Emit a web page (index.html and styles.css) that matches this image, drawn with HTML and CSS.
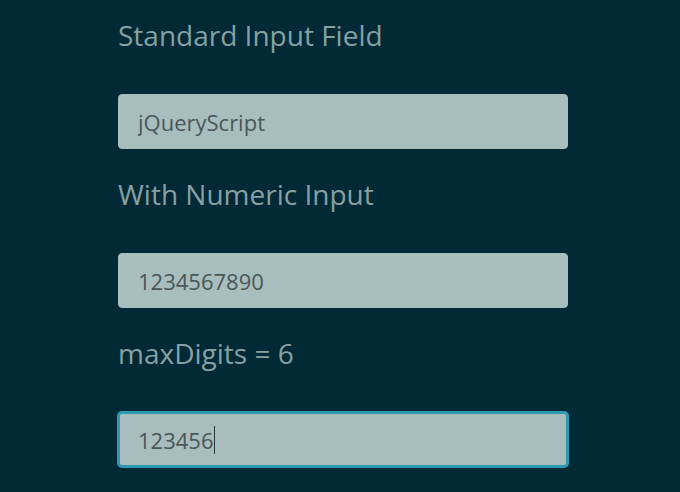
FILE: index.html
```html
<!DOCTYPE html>
<html lang="en">
<head>
    <meta charset="UTF-8">
    <meta name="viewport" content="width=device-width, initial-scale=1.0">
    <title>Input Mask Demo</title>
    <link rel="stylesheet" href="styles.css">
</head>
<body>
    <div class="container">
        <div class="field">
            <h3 class="label">Standard Input Field</h3>
            <input type="text" class="text-input" value="jQueryScript">
        </div>

        <div class="field">
            <h3 class="label">With Numeric Input</h3>
            <input type="text" class="text-input" value="1234567890">
        </div>

        <div class="field">
            <h3 class="label">maxDigits = 6</h3>
            <div class="input-wrap">
                <input type="text" class="text-input is-focused" value="123456" autofocus>
                <span class="caret"></span>
            </div>
        </div>
    </div>

    <script>
        const focused = document.querySelector('.is-focused');
        focused.focus();
        focused.setSelectionRange(focused.value.length, focused.value.length);
    </script>
</body>
</html>
```

FILE: styles.css
```css
body {
    font-family: 'Open Sans', 'Liberation Sans', sans-serif;
    margin: 0;
    padding: 0;
    background: #012a36;
    min-height: 100vh;
}

.container {
    width: 450px;
    margin-left: 118px;
    padding-top: 18px;
}

.field {
    height: 159px;
}

.label {
    color: #87a0a2;
    font-size: 28px;
    font-weight: normal;
    line-height: 34px;
    margin: 0 0 42px 0;
}

.input-wrap {
    position: relative;
}

.text-input {
    display: block;
    width: 100%;
    height: 55px;
    box-sizing: border-box;
    padding: 0 19px;
    background: #a8bdbd;
    border: 1px solid #a8bdbd;
    border-radius: 4px;
    color: #4a5759;
    font-family: 'Open Sans', 'Liberation Sans', sans-serif;
    font-size: 22px;
    outline: none;
    caret-color: transparent;
}

.text-input.is-focused,
.text-input:focus {
    border: 2px solid #2c9bb1;
    padding-left: 18px;
    box-shadow: 0 0 0 1px #2c9bb1;
}

/* blinking caret is not captured reliably, so draw it */
.caret {
    position: absolute;
    left: 96px;
    top: 14px;
    width: 1px;
    height: 28px;
    background: #2b3436;
}
```
